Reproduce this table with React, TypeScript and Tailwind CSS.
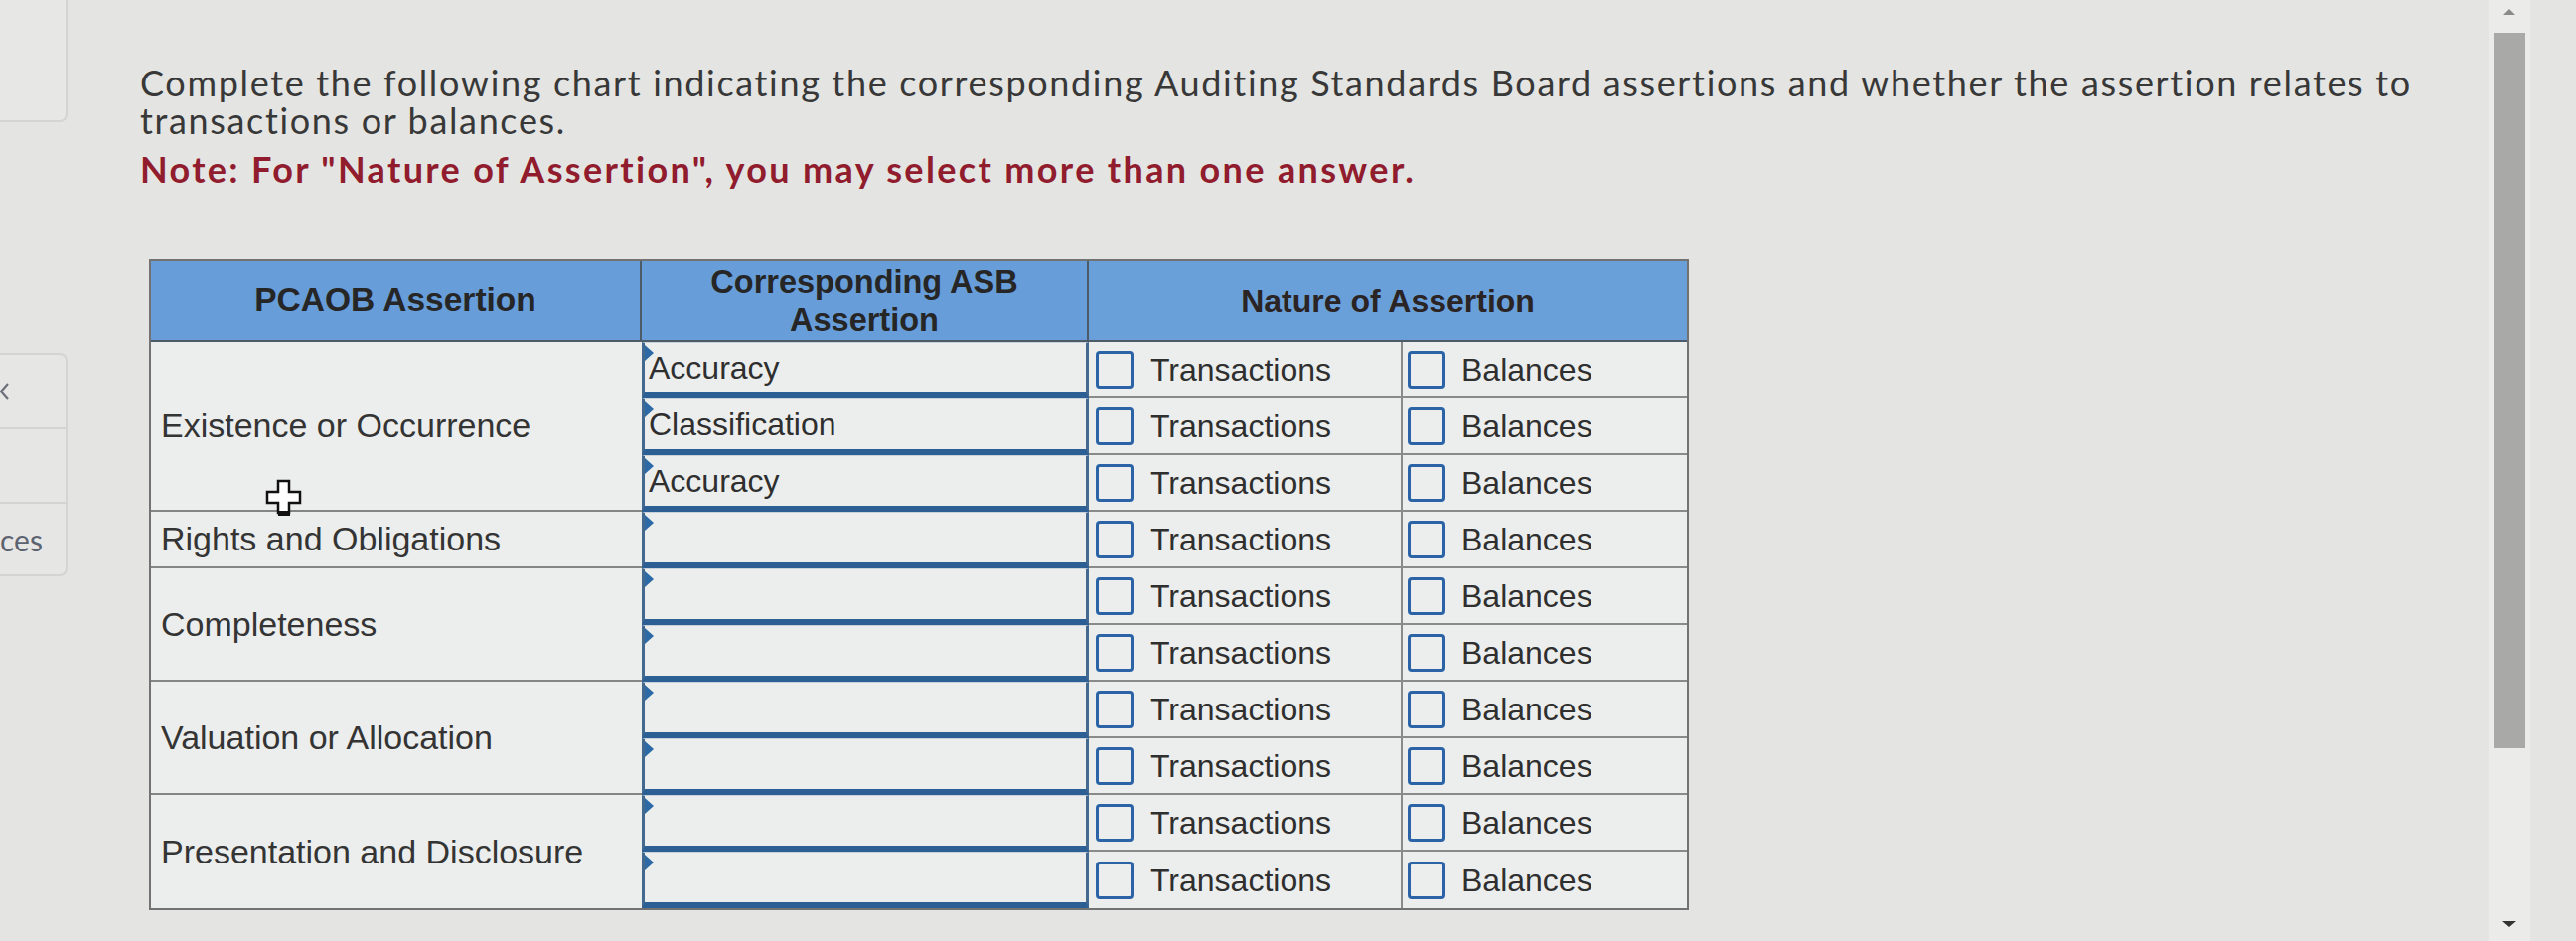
import React from "react";

function Checkbox() {
  return (
    <div className="w-[38px] h-[38px] shrink-0 rounded-[4px] border-[3px] border-[#2b63a6] bg-[#eceeed]" />
  );
}

function Chevron() {
  return (
    <svg width="10" height="18" viewBox="0 0 10 18" className="block">
      <path d="M8 1 L1 9 L8 17" fill="none" stroke="#6b6f78" strokeWidth="2.2" />
    </svg>
  );
}

export default function App() {
  const leftCells: Record<number, { label: string; span: string }> = {
    0: { label: "Existence or Occurrence", span: "row-span-3" },
    3: { label: "Rights and Obligations", span: "row-span-1" },
    4: { label: "Completeness", span: "row-span-2" },
    6: { label: "Valuation or Allocation", span: "row-span-2" },
    8: { label: "Presentation and Disclosure", span: "row-span-2" },
  };
  const dd = ["Accuracy", "Classification", "Accuracy", "", "", "", "", "", "", ""];

  const cells: React.ReactNode[] = [];
  for (let i = 0; i < 10; i++) {
    const last = i === 9;
    const lc = leftCells[i];
    if (lc) {
      const isLast = i === 8;
      cells.push(
        <div
          key={`l${i}`}
          className={`${lc.span} flex items-center pl-[10px] text-[34px] text-[#343434] ${isLast ? "" : "border-b-2 border-[#858585]"}`}
        >
          {lc.label}
        </div>
      );
    }
    cells.push(
      <div
        key={`d${i}`}
        className="relative flex items-center border-l-[3px] border-r-[3px] border-[#44698f] border-b-[6px] border-b-[#2c5f94] border-t border-t-[#c9d2da] bg-[#eceeed] pl-[4px] text-[32px] text-[#2f2f2f]"
      >
        <span className="absolute left-0 top-[2px] w-0 h-0 border-y-[8px] border-y-transparent border-l-[9px] border-l-[#2c69a5]" />
        {dd[i]}
      </div>
    );
    cells.push(
      <div
        key={`t${i}`}
        className={`flex items-center gap-[17px] pl-[7px] border-r-2 border-[#8a8a8a] text-[32px] text-[#2f2f2f] ${last ? "" : "border-b-2"}`}
      >
        <Checkbox />
        <span>Transactions</span>
      </div>
    );
    cells.push(
      <div
        key={`b${i}`}
        className={`flex items-center gap-[16px] pl-[5px] border-[#8a8a8a] text-[32px] text-[#2f2f2f] ${last ? "" : "border-b-2"}`}
      >
        <Checkbox />
        <span>Balances</span>
      </div>
    );
  }

  return (
    <div className="relative w-[2593px] h-[947px] overflow-hidden bg-[#e4e5e3] flex font-['Liberation_Sans',Arial,sans-serif]">
      {/* left sidebar */}
      <div className="w-[68px] shrink-0 flex flex-col">
        <div className="h-[123px] border-r-2 border-b-2 border-[#d3d4d3] rounded-br-[8px] bg-[#e7e8e6]" />
        <div className="mt-[232px] h-[77px] border-2 border-l-0 border-[#d3d4d3] rounded-tr-[8px] bg-[#e6e7e5] flex items-center">
          <Chevron />
        </div>
        <div className="h-[73px] border-r-2 border-[#d3d4d3] bg-[#e6e7e5]" />
        <div className="h-[75px] border-2 border-l-0 border-[#d3d4d3] rounded-br-[8px] bg-[#e6e7e5] flex items-center">
          <span className="font-['Lato',sans-serif] text-[30px] leading-none text-[#5d6270]">ces</span>
        </div>
      </div>

      {/* main */}
      <div className="flex-1 pt-[64px] pl-[73px]">
        <p className="font-['Lato',sans-serif] text-[36px] leading-[38px] tracking-[1.65px] text-[#383838]">
          Complete the following chart indicating the corresponding Auditing Standards Board assertions and whether the assertion relates to
          <br />
          transactions or balances.
        </p>
        <p className="mt-[11px] font-['Lato',sans-serif] font-bold text-[36px] leading-[38px] tracking-[2.35px] text-[#901c2d]">
          Note: For "Nature of Assertion", you may select more than one answer.
        </p>

        <div className="relative mt-[72px] ml-[9px] w-fit border-2 border-[#727272] bg-[#eceeed] grid grid-cols-[494px_450px_316px_286px] grid-rows-[81px_repeat(10,57px)]">
          <div className="flex items-center justify-center bg-[#679dd9] border-b-2 border-r-2 border-[#4d5a68] font-bold text-[33.5px] text-[#262626]">
            PCAOB Assertion
          </div>
          <div className="flex items-center justify-center text-center bg-[#679dd9] border-b-2 border-r-2 border-[#4d5a68] font-bold text-[32.5px] leading-[38px] text-[#262626]">
            Corresponding ASB
            <br />
            Assertion
          </div>
          <div className="col-span-2 flex items-center justify-center bg-[#6aa0da] border-b-2 border-[#4d5a68] font-bold text-[32px] text-[#2b2424]">
            Nature of Assertion
          </div>
          {cells}

          {/* cursor */}
          <svg
            className="absolute left-[115px] top-[219px]"
            width="38"
            height="38"
            viewBox="0 0 38 38"
          >
            <path
              d="M13 2 H24 V13 H35 V24 H24 V34 H13 V24 H2 V13 H13 Z"
              fill="#fff"
              stroke="#111"
              strokeWidth="2.5"
            />
            <rect x="13" y="32" width="12" height="5" fill="#111" />
          </svg>
        </div>
      </div>

      {/* scrollbar */}
      <div className="w-[42px] shrink-0 mr-[46px] bg-[#ebebea] flex flex-col items-center">
        <div className="mt-[9px] w-0 h-0 border-x-[6px] border-x-transparent border-b-[6px] border-b-[#8a8a8a]" />
        <div className="mt-[18px] w-[32px] h-[720px] bg-[#a9a9a8]" />
        <div className="mt-auto mb-[14px] w-0 h-0 border-x-[7px] border-x-transparent border-t-[6px] border-t-[#333]" />
      </div>
    </div>
  );
}
